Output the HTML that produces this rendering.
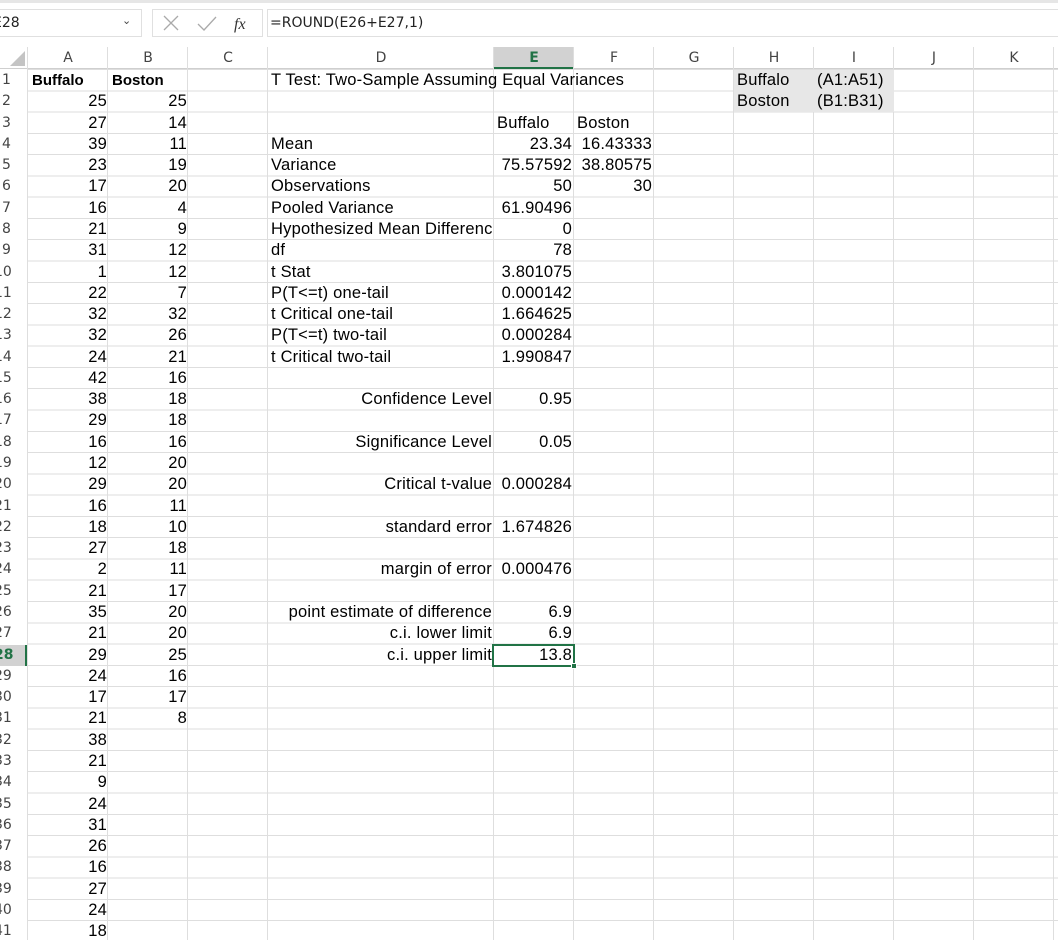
<!DOCTYPE html>
<html><head><meta charset="utf-8"><style>
*{margin:0;padding:0;box-sizing:border-box}
body{width:1058px;height:940px;overflow:hidden;background:#fff;font-family:"Liberation Sans",Arial,sans-serif;position:relative;color:#000}
.top{position:absolute;left:0;top:0;width:1058px;height:44px;background:#fff;border-top:3px solid #e6e6e6}
.nb{position:absolute;left:-2px;top:6px;width:144px;height:28px;border:1px solid #e0e0e0;font-size:14px;color:#222;padding:5px 0 0 0;font-family:"DejaVu Sans","Liberation Sans",sans-serif;overflow:hidden}
.fxb{position:absolute;left:152px;top:6px;width:111px;height:28px;border:1px solid #e0e0e0}
.fb{position:absolute;left:267px;top:6px;width:800px;height:28px;border:1px solid #e0e0e0;color:#222;padding:5px 0 0 2px;font-family:"DejaVu Sans","Liberation Sans",sans-serif;font-size:14px}
.grid{position:absolute;left:0;top:69px;width:1058px;height:871px;
background-image:repeating-linear-gradient(to bottom,#dedede 0,#dedede 1px,transparent 1px,transparent 21.28px);}
.v{position:absolute;top:47px;width:1px;height:893px;background:#dedede}
.ch{position:absolute;top:47px;height:22px;color:#444;text-align:center;line-height:22px;font-family:"DejaVu Sans","Liberation Sans",sans-serif;font-size:14px}
.rh{position:absolute;left:0;top:47px;width:28px;height:893px;background:#fff;border-right:1px solid #cfcfcf}
.r{position:absolute;left:0;height:21px;width:1058px;font-size:16.5px;line-height:21px}
.r i{position:absolute;left:-6px;width:24px;text-align:left;font-style:normal;color:#444;font-family:"DejaVu Sans","Liberation Sans",sans-serif;font-size:14px}
.r i.s{left:2px}
.r b{position:absolute;font-weight:normal;white-space:nowrap;letter-spacing:0.2px}
.r b.h{font-weight:bold;letter-spacing:0;font-size:15px}
.a{left:28px;width:79px;text-align:right}
.b{left:108px;width:79px;text-align:right}
.d{left:271px;text-align:left}
.dr{left:268px;width:224px;text-align:right}
.e{left:494px;width:78px;text-align:right}
.el{left:497px}
.f{left:574px;width:78px;text-align:right}
.fl{left:577px}
</style></head><body>
<div class="top">
<div class="nb"><span style="position:relative;left:-6px">E28</span><span style="position:absolute;left:123px;top:4px;font-size:11px;color:#444">&#8964;</span></div>
<div class="fxb">
<svg width="111" height="28" style="position:absolute;left:0;top:0"><path d="M11 6 L25 20 M25 6 L11 20" stroke="#aaa" stroke-width="1.3" fill="none"/><path d="M45 14 L51 20 L63 7" stroke="#aaa" stroke-width="1.3" fill="none"/><text x="81" y="19" font-family="Liberation Serif,serif" font-style="italic" font-size="16" fill="#333">fx</text></svg>
</div>
<div class="fb">=ROUND(E26+E27,1)</div>
</div>
<div class="grid"></div>
<div class="rh"></div>
<div style="position:absolute;left:0;top:47px;width:1058px;height:22px;border-bottom:1px solid #cfcfcf;background:#fff"></div>
<div style="position:absolute;left:494px;top:47px;width:80px;height:22px;background:#d2d2d2;border-bottom:2px solid #217346"></div>
<svg style="position:absolute;left:8px;top:50px" width="18" height="17"><polygon points="17,1 17,16 2,16" fill="#c4c4c4"/></svg>
<div class="v" style="left:27px"></div><div class="v" style="left:107px"></div><div class="v" style="left:187px"></div><div class="v" style="left:267px"></div><div class="v" style="left:493px"></div><div class="v" style="left:573px"></div><div class="v" style="left:653px"></div><div class="v" style="left:733px"></div><div class="v" style="left:813px"></div><div class="v" style="left:893px"></div><div class="v" style="left:973px"></div><div class="v" style="left:1053px"></div>
<div style="position:absolute;left:734px;top:70px;width:160px;height:42px;background:#e7e7e7"></div>
<div style="position:absolute;left:0;top:645px;width:27px;height:21px;background:#d2d2d2;border-right:2px solid #217346"></div>
<div class="ch" style="left:28px;width:80px">A</div><div class="ch" style="left:108px;width:80px">B</div><div class="ch" style="left:188px;width:80px">C</div><div class="ch" style="left:268px;width:226px">D</div><div class="ch" style="left:494px;width:80px;color:#217346;font-weight:bold">E</div><div class="ch" style="left:574px;width:80px">F</div><div class="ch" style="left:654px;width:80px">G</div><div class="ch" style="left:734px;width:80px">H</div><div class="ch" style="left:814px;width:80px">I</div><div class="ch" style="left:894px;width:80px">J</div><div class="ch" style="left:974px;width:80px">K</div>

<div class="r" style="top:70px"><i class="s">1</i><b class="h" style="left:32px">Buffalo</b><b class="h" style="left:112px">Boston</b><b class="d">T Test: Two-Sample Assuming Equal Variances</b><b style="left:737px">Buffalo</b><b style="left:817px">(A1:A51)</b></div>
<div class="r" style="top:91px"><i class="s">2</i><b class="a">25</b><b class="b">25</b><b style="left:737px">Boston</b><b style="left:817px">(B1:B31)</b></div>
<div class="r" style="top:113px"><i class="s">3</i><b class="a">27</b><b class="b">14</b><b class="el">Buffalo</b><b class="fl">Boston</b></div>
<div class="r" style="top:134px"><i class="s">4</i><b class="a">39</b><b class="b">11</b><b class="d">Mean</b><b class="e">23.34</b><b class="f">16.43333</b></div>
<div class="r" style="top:155px"><i class="s">5</i><b class="a">23</b><b class="b">19</b><b class="d">Variance</b><b class="e">75.57592</b><b class="f">38.80575</b></div>
<div class="r" style="top:176px"><i class="s">6</i><b class="a">17</b><b class="b">20</b><b class="d">Observations</b><b class="e">50</b><b class="f">30</b></div>
<div class="r" style="top:198px"><i class="s">7</i><b class="a">16</b><b class="b">4</b><b class="d">Pooled Variance</b><b class="e">61.90496</b></div>
<div class="r" style="top:219px"><i class="s">8</i><b class="a">21</b><b class="b">9</b><b class="d" style="width:222px;overflow:hidden">Hypothesized Mean Difference</b><b class="e">0</b></div>
<div class="r" style="top:240px"><i class="s">9</i><b class="a">31</b><b class="b">12</b><b class="d">df</b><b class="e">78</b></div>
<div class="r" style="top:262px"><i>10</i><b class="a">1</b><b class="b">12</b><b class="d">t Stat</b><b class="e">3.801075</b></div>
<div class="r" style="top:283px"><i>11</i><b class="a">22</b><b class="b">7</b><b class="d">P(T&lt;=t) one-tail</b><b class="e">0.000142</b></div>
<div class="r" style="top:304px"><i>12</i><b class="a">32</b><b class="b">32</b><b class="d">t Critical one-tail</b><b class="e">1.664625</b></div>
<div class="r" style="top:325px"><i>13</i><b class="a">32</b><b class="b">26</b><b class="d">P(T&lt;=t) two-tail</b><b class="e">0.000284</b></div>
<div class="r" style="top:347px"><i>14</i><b class="a">24</b><b class="b">21</b><b class="d">t Critical two-tail</b><b class="e">1.990847</b></div>
<div class="r" style="top:368px"><i>15</i><b class="a">42</b><b class="b">16</b></div>
<div class="r" style="top:389px"><i>16</i><b class="a">38</b><b class="b">18</b><b class="dr">Confidence Level</b><b class="e">0.95</b></div>
<div class="r" style="top:410px"><i>17</i><b class="a">29</b><b class="b">18</b></div>
<div class="r" style="top:432px"><i>18</i><b class="a">16</b><b class="b">16</b><b class="dr">Significance Level</b><b class="e">0.05</b></div>
<div class="r" style="top:453px"><i>19</i><b class="a">12</b><b class="b">20</b></div>
<div class="r" style="top:474px"><i>20</i><b class="a">29</b><b class="b">20</b><b class="dr">Critical t-value</b><b class="e">0.000284</b></div>
<div class="r" style="top:496px"><i>21</i><b class="a">16</b><b class="b">11</b></div>
<div class="r" style="top:517px"><i>22</i><b class="a">18</b><b class="b">10</b><b class="dr">standard error</b><b class="e">1.674826</b></div>
<div class="r" style="top:538px"><i>23</i><b class="a">27</b><b class="b">18</b></div>
<div class="r" style="top:559px"><i>24</i><b class="a">2</b><b class="b">11</b><b class="dr">margin of error</b><b class="e">0.000476</b></div>
<div class="r" style="top:581px"><i>25</i><b class="a">21</b><b class="b">17</b></div>
<div class="r" style="top:602px"><i>26</i><b class="a">35</b><b class="b">20</b><b class="dr">point estimate of difference</b><b class="e">6.9</b></div>
<div class="r" style="top:623px"><i>27</i><b class="a">21</b><b class="b">20</b><b class="dr">c.i. lower limit</b><b class="e">6.9</b></div>
<div class="r" style="top:645px"><i style="color:#217346;font-weight:bold">28</i><b class="a">29</b><b class="b">25</b><b class="dr">c.i. upper limit</b><b class="e">13.8</b></div>
<div class="r" style="top:666px"><i>29</i><b class="a">24</b><b class="b">16</b></div>
<div class="r" style="top:687px"><i>30</i><b class="a">17</b><b class="b">17</b></div>
<div class="r" style="top:708px"><i>31</i><b class="a">21</b><b class="b">8</b></div>
<div class="r" style="top:730px"><i>32</i><b class="a">38</b></div>
<div class="r" style="top:751px"><i>33</i><b class="a">21</b></div>
<div class="r" style="top:772px"><i>34</i><b class="a">9</b></div>
<div class="r" style="top:794px"><i>35</i><b class="a">24</b></div>
<div class="r" style="top:815px"><i>36</i><b class="a">31</b></div>
<div class="r" style="top:836px"><i>37</i><b class="a">26</b></div>
<div class="r" style="top:857px"><i>38</i><b class="a">16</b></div>
<div class="r" style="top:879px"><i>39</i><b class="a">27</b></div>
<div class="r" style="top:900px"><i>40</i><b class="a">24</b></div>
<div class="r" style="top:921px"><i>41</i><b class="a">18</b></div>

<div style="position:absolute;left:492px;top:644px;width:83px;height:23px;border:2px solid #217346"></div>
<div style="position:absolute;left:571px;top:663px;width:6px;height:6px;background:#217346;border:1px solid #fff"></div>
</body></html>
